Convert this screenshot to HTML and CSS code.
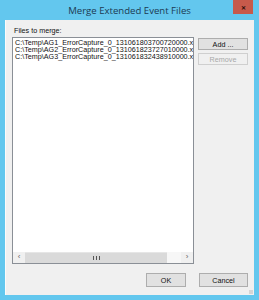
FILE: index.html
```html
<!DOCTYPE html>
<html lang="en">
<head>
    <meta charset="UTF-8">
    <title>Merge Extended Event Files</title>
    <link rel="stylesheet" href="styles.css">
</head>
<body>
    <div class="window">
        <!-- Title bar -->
        <div class="titlebar">
            <span class="title">Merge Extended Event Files</span>
            <div class="close">&#x2715;</div>
        </div>

        <!-- Dialog body -->
        <div class="client">
            <div class="label">Files to merge:</div>
            <div class="main">
                <div class="listbox">
                    <div class="items">
                        <div class="item">C:\Temp\AG1_ErrorCapture_0_131061803700720000.xel</div>
                        <div class="item">C:\Temp\AG2_ErrorCapture_0_131061823727010000.xel</div>
                        <div class="item">C:\Temp\AG3_ErrorCapture_0_131061832438910000.xel</div>
                    </div>
                    <div class="hscroll">
                        <div class="arrow">&#x2039;</div>
                        <div class="thumb"><span class="grip"></span></div>
                        <div class="track"></div>
                        <div class="arrow">&#x203A;</div>
                    </div>
                </div>
                <div class="side">
                    <button class="btn">Add ...</button>
                    <button class="btn" disabled>Remove</button>
                </div>
            </div>
            <div class="footer">
                <button class="btn ok">OK</button>
                <button class="btn cancel">Cancel</button>
            </div>
            <div class="grip-corner"></div>
        </div>
    </div>
</body>
</html>
```

FILE: styles.css
```css
body {
    margin: 0;
    padding: 0;
    background-color: #63c7ee;
    font-family: "Liberation Sans", Arial, sans-serif;
}
.window {
    width: 259px;
    height: 300px;
    background-color: #63c7ee;
}
.titlebar {
    position: relative;
    height: 20px;
    display: flex;
    align-items: center;
    justify-content: center;
}
.title {
    font-family: "Open Sans", "Liberation Sans", sans-serif;
    font-size: 9.6px;
    color: #1c3a52;
    margin-top: 1px;
}
.close {
    position: absolute;
    top: 0;
    left: 233px;
    width: 20px;
    height: 14px;
    background-color: #c75a4b;
    color: #2a0c08;
    font-size: 6px;
    font-weight: bold;
    display: flex;
    align-items: center;
    justify-content: center;
}
.client {
    position: relative;
    margin: 0 5px;
    height: 275px;
    background-color: #f0f0f0;
    border-left: 1px solid #fbfbfb;
    box-sizing: border-box;
    padding: 6px 0 0 6px;
    font-size: 7.2px;
    color: #111;
}
.label {
    height: 11px;
    line-height: 10px;
    padding-left: 2px;
}
.main {
    display: grid;
    grid-template-columns: 182px 50px;
    column-gap: 4px;
}
.listbox {
    height: 227px;
    box-sizing: border-box;
    border: 1px solid #8a8f96;
    background-color: #fff;
    display: flex;
    flex-direction: column;
    overflow: hidden;
}
.items {
    flex: 1;
    padding: 1px 0 0 2px;
    white-space: nowrap;
    overflow: hidden;
}
.item {
    height: 7px;
    line-height: 7px;
}
.hscroll {
    height: 11px;
    display: flex;
    background-color: #f0f0f0;
}
.arrow {
    width: 12px;
    color: #666;
    font-size: 8px;
    line-height: 10px;
    text-align: center;
}
.thumb {
    width: 142px;
    background-color: #dadada;
    border-top: 1px solid #e6e6e6;
    display: flex;
    align-items: center;
    justify-content: center;
}
.grip {
    width: 5px;
    height: 4px;
    border-left: 1px solid #555;
    border-right: 1px solid #555;
    background: linear-gradient(to right, transparent 2px, #555 2px, #555 3px, transparent 3px);
}
.track {
    flex: 1;
    background-color: #f7f7f7;
}
.side {
    display: flex;
    flex-direction: column;
    gap: 3px;
    padding-top: 1px;
}
.btn {
    height: 12px;
    margin: 0;
    padding: 0;
    border: 1px solid #adadad;
    background-color: #e1e1e1;
    font-family: "Liberation Sans", Arial, sans-serif;
    font-size: 7.2px;
    color: #111;
}
.btn:disabled {
    border-color: #cfcfcf;
    background-color: #f0f0f0;
    color: #a8a8a8;
}
.footer {
    display: flex;
    justify-content: flex-end;
    gap: 13px;
    padding: 9px 6px 0 0;
}
.footer .btn {
    height: 14px;
}
.ok {
    width: 40px;
}
.cancel {
    width: 49px;
}
.grip-corner {
    position: absolute;
    right: 1px;
    bottom: 1px;
    width: 4px;
    height: 4px;
    background: radial-gradient(circle, #b5b5b5 0.6px, transparent 0.8px) 0 0 / 2px 2px;
}
```
